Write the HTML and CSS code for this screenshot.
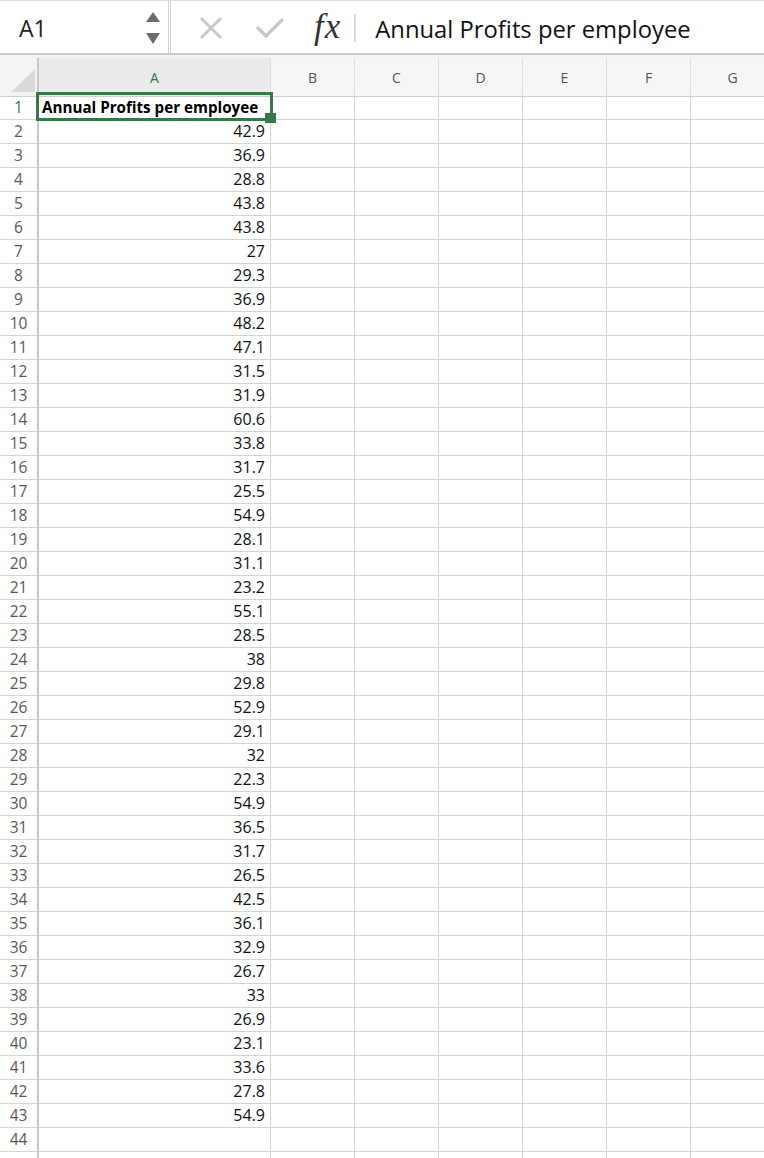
FILE: index.html
```html
<!DOCTYPE html>
<html>
<head>
<meta charset="utf-8">
<link rel="stylesheet" href="styles.css">
</head>
<body>
<div class="topbar">
  <div class="namebox">
    <span class="ref">A1</span>
    <svg class="spin" width="14" height="32" viewBox="0 0 14 32"><polygon points="7,0 14,10 0,10" fill="#6b6b6b"/><polygon points="0,21 14,21 7,32" fill="#6b6b6b"/></svg>
  </div>
  <div class="formula">
    <svg class="ico-x" width="22" height="22" viewBox="0 0 22 22"><path d="M2 2 L20 20 M20 2 L2 20" stroke="#c8c8c8" stroke-width="3" stroke-linecap="round" fill="none"/></svg>
    <svg class="ico-ok" width="28" height="22" viewBox="0 0 28 22"><path d="M2 11 L10 19 L26 3" stroke="#c8c8c8" stroke-width="3.2" stroke-linecap="round" stroke-linejoin="round" fill="none"/></svg>
    <span class="fx">fx</span>
    <span class="fsep"></span>
    <span class="ftext">Annual Profits per employee</span>
  </div>
</div>
<div class="strip"></div>
<div class="sheet">
  <div class="colhead">
    <div class="corner"><svg width="24" height="23" viewBox="0 0 24 23"><polygon points="24,0 24,23 0,23" fill="#dadada"/></svg></div>
    <div class="ch sel-col">A</div><div class="ch">B</div><div class="ch">C</div><div class="ch">D</div><div class="ch">E</div><div class="ch">F</div><div class="ch">G</div>
  </div>
  <div class="row"><div class="rh sel-row">1</div><div class="c title">Annual Profits per employee</div><div class="c"></div><div class="c"></div><div class="c"></div><div class="c"></div><div class="c"></div><div class="c"></div></div>
  <div class="row"><div class="rh">2</div><div class="c num">42.9</div><div class="c"></div><div class="c"></div><div class="c"></div><div class="c"></div><div class="c"></div><div class="c"></div></div>
  <div class="row"><div class="rh">3</div><div class="c num">36.9</div><div class="c"></div><div class="c"></div><div class="c"></div><div class="c"></div><div class="c"></div><div class="c"></div></div>
  <div class="row"><div class="rh">4</div><div class="c num">28.8</div><div class="c"></div><div class="c"></div><div class="c"></div><div class="c"></div><div class="c"></div><div class="c"></div></div>
  <div class="row"><div class="rh">5</div><div class="c num">43.8</div><div class="c"></div><div class="c"></div><div class="c"></div><div class="c"></div><div class="c"></div><div class="c"></div></div>
  <div class="row"><div class="rh">6</div><div class="c num">43.8</div><div class="c"></div><div class="c"></div><div class="c"></div><div class="c"></div><div class="c"></div><div class="c"></div></div>
  <div class="row"><div class="rh">7</div><div class="c num">27</div><div class="c"></div><div class="c"></div><div class="c"></div><div class="c"></div><div class="c"></div><div class="c"></div></div>
  <div class="row"><div class="rh">8</div><div class="c num">29.3</div><div class="c"></div><div class="c"></div><div class="c"></div><div class="c"></div><div class="c"></div><div class="c"></div></div>
  <div class="row"><div class="rh">9</div><div class="c num">36.9</div><div class="c"></div><div class="c"></div><div class="c"></div><div class="c"></div><div class="c"></div><div class="c"></div></div>
  <div class="row"><div class="rh">10</div><div class="c num">48.2</div><div class="c"></div><div class="c"></div><div class="c"></div><div class="c"></div><div class="c"></div><div class="c"></div></div>
  <div class="row"><div class="rh">11</div><div class="c num">47.1</div><div class="c"></div><div class="c"></div><div class="c"></div><div class="c"></div><div class="c"></div><div class="c"></div></div>
  <div class="row"><div class="rh">12</div><div class="c num">31.5</div><div class="c"></div><div class="c"></div><div class="c"></div><div class="c"></div><div class="c"></div><div class="c"></div></div>
  <div class="row"><div class="rh">13</div><div class="c num">31.9</div><div class="c"></div><div class="c"></div><div class="c"></div><div class="c"></div><div class="c"></div><div class="c"></div></div>
  <div class="row"><div class="rh">14</div><div class="c num">60.6</div><div class="c"></div><div class="c"></div><div class="c"></div><div class="c"></div><div class="c"></div><div class="c"></div></div>
  <div class="row"><div class="rh">15</div><div class="c num">33.8</div><div class="c"></div><div class="c"></div><div class="c"></div><div class="c"></div><div class="c"></div><div class="c"></div></div>
  <div class="row"><div class="rh">16</div><div class="c num">31.7</div><div class="c"></div><div class="c"></div><div class="c"></div><div class="c"></div><div class="c"></div><div class="c"></div></div>
  <div class="row"><div class="rh">17</div><div class="c num">25.5</div><div class="c"></div><div class="c"></div><div class="c"></div><div class="c"></div><div class="c"></div><div class="c"></div></div>
  <div class="row"><div class="rh">18</div><div class="c num">54.9</div><div class="c"></div><div class="c"></div><div class="c"></div><div class="c"></div><div class="c"></div><div class="c"></div></div>
  <div class="row"><div class="rh">19</div><div class="c num">28.1</div><div class="c"></div><div class="c"></div><div class="c"></div><div class="c"></div><div class="c"></div><div class="c"></div></div>
  <div class="row"><div class="rh">20</div><div class="c num">31.1</div><div class="c"></div><div class="c"></div><div class="c"></div><div class="c"></div><div class="c"></div><div class="c"></div></div>
  <div class="row"><div class="rh">21</div><div class="c num">23.2</div><div class="c"></div><div class="c"></div><div class="c"></div><div class="c"></div><div class="c"></div><div class="c"></div></div>
  <div class="row"><div class="rh">22</div><div class="c num">55.1</div><div class="c"></div><div class="c"></div><div class="c"></div><div class="c"></div><div class="c"></div><div class="c"></div></div>
  <div class="row"><div class="rh">23</div><div class="c num">28.5</div><div class="c"></div><div class="c"></div><div class="c"></div><div class="c"></div><div class="c"></div><div class="c"></div></div>
  <div class="row"><div class="rh">24</div><div class="c num">38</div><div class="c"></div><div class="c"></div><div class="c"></div><div class="c"></div><div class="c"></div><div class="c"></div></div>
  <div class="row"><div class="rh">25</div><div class="c num">29.8</div><div class="c"></div><div class="c"></div><div class="c"></div><div class="c"></div><div class="c"></div><div class="c"></div></div>
  <div class="row"><div class="rh">26</div><div class="c num">52.9</div><div class="c"></div><div class="c"></div><div class="c"></div><div class="c"></div><div class="c"></div><div class="c"></div></div>
  <div class="row"><div class="rh">27</div><div class="c num">29.1</div><div class="c"></div><div class="c"></div><div class="c"></div><div class="c"></div><div class="c"></div><div class="c"></div></div>
  <div class="row"><div class="rh">28</div><div class="c num">32</div><div class="c"></div><div class="c"></div><div class="c"></div><div class="c"></div><div class="c"></div><div class="c"></div></div>
  <div class="row"><div class="rh">29</div><div class="c num">22.3</div><div class="c"></div><div class="c"></div><div class="c"></div><div class="c"></div><div class="c"></div><div class="c"></div></div>
  <div class="row"><div class="rh">30</div><div class="c num">54.9</div><div class="c"></div><div class="c"></div><div class="c"></div><div class="c"></div><div class="c"></div><div class="c"></div></div>
  <div class="row"><div class="rh">31</div><div class="c num">36.5</div><div class="c"></div><div class="c"></div><div class="c"></div><div class="c"></div><div class="c"></div><div class="c"></div></div>
  <div class="row"><div class="rh">32</div><div class="c num">31.7</div><div class="c"></div><div class="c"></div><div class="c"></div><div class="c"></div><div class="c"></div><div class="c"></div></div>
  <div class="row"><div class="rh">33</div><div class="c num">26.5</div><div class="c"></div><div class="c"></div><div class="c"></div><div class="c"></div><div class="c"></div><div class="c"></div></div>
  <div class="row"><div class="rh">34</div><div class="c num">42.5</div><div class="c"></div><div class="c"></div><div class="c"></div><div class="c"></div><div class="c"></div><div class="c"></div></div>
  <div class="row"><div class="rh">35</div><div class="c num">36.1</div><div class="c"></div><div class="c"></div><div class="c"></div><div class="c"></div><div class="c"></div><div class="c"></div></div>
  <div class="row"><div class="rh">36</div><div class="c num">32.9</div><div class="c"></div><div class="c"></div><div class="c"></div><div class="c"></div><div class="c"></div><div class="c"></div></div>
  <div class="row"><div class="rh">37</div><div class="c num">26.7</div><div class="c"></div><div class="c"></div><div class="c"></div><div class="c"></div><div class="c"></div><div class="c"></div></div>
  <div class="row"><div class="rh">38</div><div class="c num">33</div><div class="c"></div><div class="c"></div><div class="c"></div><div class="c"></div><div class="c"></div><div class="c"></div></div>
  <div class="row"><div class="rh">39</div><div class="c num">26.9</div><div class="c"></div><div class="c"></div><div class="c"></div><div class="c"></div><div class="c"></div><div class="c"></div></div>
  <div class="row"><div class="rh">40</div><div class="c num">23.1</div><div class="c"></div><div class="c"></div><div class="c"></div><div class="c"></div><div class="c"></div><div class="c"></div></div>
  <div class="row"><div class="rh">41</div><div class="c num">33.6</div><div class="c"></div><div class="c"></div><div class="c"></div><div class="c"></div><div class="c"></div><div class="c"></div></div>
  <div class="row"><div class="rh">42</div><div class="c num">27.8</div><div class="c"></div><div class="c"></div><div class="c"></div><div class="c"></div><div class="c"></div><div class="c"></div></div>
  <div class="row"><div class="rh">43</div><div class="c num">54.9</div><div class="c"></div><div class="c"></div><div class="c"></div><div class="c"></div><div class="c"></div><div class="c"></div></div>
  <div class="row"><div class="rh">44</div><div class="c"></div><div class="c"></div><div class="c"></div><div class="c"></div><div class="c"></div><div class="c"></div><div class="c"></div></div>
  <div class="row"><div class="rh"></div><div class="c"></div><div class="c"></div><div class="c"></div><div class="c"></div><div class="c"></div><div class="c"></div><div class="c"></div></div>
  <div class="selection"></div>
  <div class="handle"></div>
</div>
</body>
</html>
```
FILE: styles.css
```css
html, body {
  margin: 0;
  padding: 0;
}
body {
  width: 764px;
  height: 1158px;
  overflow: hidden;
  background: #ffffff;
  font-family: "Open Sans", "Noto Sans", sans-serif;
  color: #111;
}

/* ---------- formula bar ---------- */
.topbar {
  display: flex;
  height: 52px;
  border-top: 1px solid #dedede;
  border-bottom: 2px solid #c9c9c9;
  background: #fff;
}
.namebox {
  box-sizing: border-box;
  width: 171px;
  flex: 0 0 171px;
  border-right: 3px double #d0d0d0;
  display: flex;
  align-items: center;
  justify-content: space-between;
  padding: 3px 8px 0 19px;
}
.ref {
  font-size: 23px;
  color: #222;
  line-height: 1;
  margin-top: -1px;
}
.spin {
  display: block;
  margin-top: -1px;
}
.formula {
  flex: 1;
  display: flex;
  align-items: center;
  min-width: 0;
  padding-top: 4px;
}
.ico-x {
  display: block;
  margin-left: 29px;
  margin-top: -2px;
}
.ico-ok {
  display: block;
  margin-left: 34px;
  margin-top: -2px;
}
.fx {
  font-family: "Liberation Serif", "DejaVu Serif", serif;
  font-style: italic;
  font-size: 35px;
  line-height: 1;
  color: #333;
  margin-left: 30px;
  margin-top: -6px;
  letter-spacing: 1px;
}
.fsep {
  display: block;
  width: 2px;
  height: 28px;
  background: #dadada;
  margin-left: 13px;
  margin-top: -2px;
}
.ftext {
  font-size: 23.8px;
  color: #111;
  margin-left: 19px;
  margin-top: 0;
  white-space: nowrap;
}

.strip {
  height: 3px;
  background: #f4f4f4;
}

/* ---------- sheet ---------- */
.sheet {
  position: relative;
  width: 775px;
}
.colhead,
.row {
  display: grid;
  grid-template-columns: 39px 232px repeat(6, 84px);
}
.colhead {
  height: 37px;
}
.corner {
  box-sizing: border-box;
  background: #f4f4f4;
  border-right: 2px solid #c8c8c8;
  border-bottom: 1px solid #cfcfcf;
  display: flex;
  align-items: flex-end;
  justify-content: flex-end;
  padding: 0 2px 4px 0;
}
.corner svg {
  display: block;
}
.ch {
  box-sizing: border-box;
  background: #f6f6f6;
  border-right: 1px solid #dedede;
  border-bottom: 1px solid #cfcfcf;
  text-align: center;
  font-size: 14px;
  color: #555;
  line-height: 36px;
  padding-top: 2px;
}
.ch.sel-col {
  background: #ebebeb;
  color: #2f7446;
}

.row {
  height: 24px;
}
.rh {
  box-sizing: border-box;
  border-right: 2px solid #c8c8c8;
  border-bottom: 1px solid #d6d6d6;
  text-align: center;
  font-size: 15.5px;
  line-height: 23px;
  padding-top: 1px;
  color: #595959;
}
.rh.sel-row {
  color: #2f7446;
}
.c {
  box-sizing: border-box;
  border-right: 1px solid #d4d4d4;
  border-bottom: 1px solid #d4d4d4;
  font-size: 16px;
  line-height: 23px;
  padding-top: 1px;
  white-space: nowrap;
  overflow: hidden;
}
.num {
  text-align: right;
  padding-right: 5px;
}
.title {
  font-weight: bold;
  font-size: 15.2px;
  padding-left: 3px;
  color: #000;
}

/* selection overlay */
.selection {
  position: absolute;
  box-sizing: border-box;
  left: 36px;
  top: 34px;
  width: 237px;
  height: 29px;
  border: 3px solid #37774a;
}
.handle {
  position: absolute;
  left: 265px;
  top: 55px;
  width: 11px;
  height: 10px;
  background: #37774a;
}
```
